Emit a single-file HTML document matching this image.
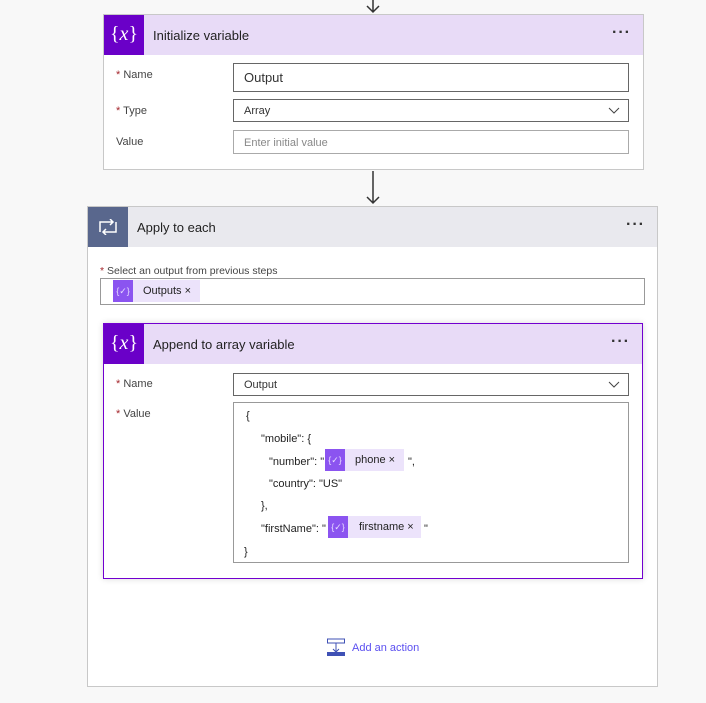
<!DOCTYPE html>
<html><head><style>
*{box-sizing:border-box;margin:0;padding:0}
body{width:706px;height:703px;background:#f8f8f8;font-family:"Liberation Sans",sans-serif;position:relative;overflow:hidden;color:#333}
.abs{position:absolute}
.card{position:absolute;background:#fff;border:1px solid #c8c8c8}
.hdr{position:absolute;left:0;right:0;top:0;height:40px;background:#e8dbf7}
.ico{position:absolute;left:0;top:0;width:40px;height:40px;background:#6a00c8;color:#fff;font-family:"Liberation Serif",serif;font-size:20px;text-align:center;line-height:38px}
.title{position:absolute;left:49px;top:13px;font-size:13px;color:#222}
.dots{position:absolute;right:12px;top:9px;font-size:16px;letter-spacing:1px;color:#333;font-weight:bold}
.lbl{position:absolute;font-size:11px;color:#444}
.lbl b{color:#a4262c;font-weight:normal}
.inp{position:absolute;border:1px solid #666;background:#fff;font-size:12px;padding-left:10px}
.tok{position:absolute;background:#ece3fb;height:22px;font-size:11px;color:#222}
.tok i{position:absolute;left:0;top:0;width:20px;height:22px;background:#8b54f0;color:#e8dcff;font-style:normal;font-size:9px;text-align:center;line-height:22px}
.code{position:absolute;font-size:11px;color:#222}
</style></head><body>
<svg class="abs" style="left:365px;top:0" width="16" height="14"><path d="M8 0V12M2 6L8 12L14 6" stroke="#333" stroke-width="1.5" fill="none"/></svg>
<div class="card" style="left:103px;top:14px;width:541px;height:156px">
 <div class="hdr"></div><div class="ico">{<i>x</i>}</div>
 <div class="title">Initialize variable</div><div class="dots">···</div>
 <div class="lbl" style="left:12px;top:54px"><b>* </b>Name</div>
 <div class="inp" style="left:129px;top:48px;width:396px;height:29px;line-height:28px;font-size:13px">Output</div>
 <div class="lbl" style="left:12px;top:90px"><b>* </b>Type</div>
 <div class="inp" style="left:129px;top:84px;width:396px;height:23px;line-height:23px;font-size:11px">Array
  <svg class="abs" style="right:8px;top:7px" width="12" height="8"><path d="M1 1L6 6L11 1" stroke="#444" fill="none"/></svg></div>
 <div class="lbl" style="left:12px;top:121px">Value</div>
 <div class="inp" style="left:129px;top:115px;width:396px;height:24px;line-height:24px;font-size:11px;color:#888;border-color:#aaa">Enter initial value</div>
</div>
<svg class="abs" style="left:365px;top:171px" width="16" height="35"><path d="M8 0V32M2 26L8 32L14 26" stroke="#333" stroke-width="1.5" fill="none"/></svg>
<div class="card" style="left:87px;top:206px;width:571px;height:481px">
 <div class="hdr" style="background:#e9e9ee"></div>
 <div class="ico" style="background:#59678d"><svg width="20" height="16" style="margin-top:12px"><path d="M2 13V3H15M12 0L15 3L12 6M18 3V13H5M8 10L5 13L8 16" stroke="#fff" stroke-width="1.5" fill="none"/></svg></div>
 <div class="title">Apply to each</div><div class="dots">···</div>
 <div class="lbl" style="left:12px;top:58px;font-size:10.5px"><b>* </b>Select an output from previous steps</div>
 <div class="inp" style="left:12px;top:71px;width:545px;height:27px;border-color:#999"></div>
 <div class="tok" style="left:25px;top:73px;width:87px"><i>{✓}</i><span class="abs" style="left:30px;top:5px">Outputs ×</span></div>
 <div class="card" style="left:15px;top:116px;width:540px;height:256px;border-color:#7200d0;box-shadow:0 0 6px rgba(0,0,0,.15)">
  <div class="hdr"></div><div class="ico">{<i>x</i>}</div>
  <div class="title">Append to array variable</div><div class="dots">···</div>
  <div class="lbl" style="left:12px;top:54px"><b>* </b>Name</div>
  <div class="inp" style="left:129px;top:49px;width:396px;height:23px;line-height:23px;font-size:11px">Output
   <svg class="abs" style="right:8px;top:7px" width="12" height="8"><path d="M1 1L6 6L11 1" stroke="#444" fill="none"/></svg></div>
  <div class="lbl" style="left:12px;top:84px"><b>* </b>Value</div>
  <div class="inp" style="left:129px;top:78px;width:396px;height:161px;border-color:#999"></div>
  <div class="code" style="left:142px;top:86px">{</div>
  <div class="code" style="left:157px;top:109px">"mobile": {</div>
  <div class="code" style="left:165px;top:132px">"number": "</div>
  <div class="tok" style="left:221px;top:125px;width:79px"><i>{✓}</i><span class="abs" style="left:30px;top:5px">phone ×</span></div>
  <div class="code" style="left:304px;top:132px">",</div>
  <div class="code" style="left:165px;top:154px">"country": "US"</div>
  <div class="code" style="left:157px;top:176px">},</div>
  <div class="code" style="left:157px;top:199px">"firstName": "</div>
  <div class="tok" style="left:224px;top:192px;width:93px"><i>{✓}</i><span class="abs" style="left:31px;top:5px">firstname ×</span></div>
  <div class="code" style="left:320px;top:199px">"</div>
  <div class="code" style="left:140px;top:222px">}</div>
 </div>
 <svg class="abs" style="left:239px;top:431px" width="19" height="19"><rect x="0.5" y="1" width="17" height="4" stroke="#3f51b5" fill="none"/><path d="M9 5V14M6 11L9 14L12 11" stroke="#3f51b5" fill="none"/><rect x="0" y="14" width="18" height="4" fill="#3f51b5"/></svg>
 <div class="abs" style="left:264px;top:435px;font-size:11px;color:#5b4ff0">Add an action</div>
</div>
</body></html>
